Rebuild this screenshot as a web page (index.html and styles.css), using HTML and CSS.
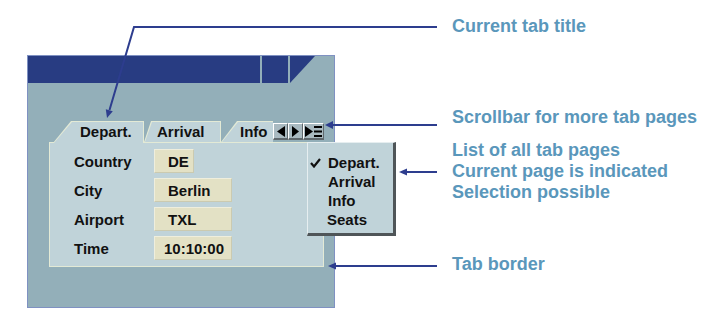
FILE: index.html
```html
<!DOCTYPE html>
<html lang="en">
<head>
    <meta charset="UTF-8">
    <meta name="viewport" content="width=device-width, initial-scale=1.0">
    <title>Tab strip</title>
    <link rel="stylesheet" href="styles.css">
</head>
<body>
    <div class="slide">

        <div class="window">
            <div class="titlebar">
                <div class="bar-main"></div>
                <div class="bar-box"></div>
                <div class="bar-corner"></div>
            </div>

            <div class="tabs">
                <div class="tab tab-active tab-depart"><div class="tab-face">Depart.</div></div>
                <div class="tab tab-arrival"><div class="tab-face">Arrival</div></div>
                <div class="tab tab-info"><div class="tab-face">Info</div></div>
                <div class="scroller">
                    <div class="btn">
                        <svg width="8" height="11" viewBox="0 0 8 11"><polygon points="8,0 8,11 0,5.5" fill="#000"/></svg>
                    </div>
                    <div class="btn">
                        <svg width="7" height="11" viewBox="0 0 7 11"><polygon points="0,0 0,11 7,5.5" fill="#000"/></svg>
                    </div>
                    <div class="btn btn-list">
                        <svg width="17" height="11" viewBox="0 0 17 11">
                            <polygon points="0,0 0,11 8,5.5" fill="#000"/>
                            <rect x="9" y="0" width="8" height="2" fill="#000"/>
                            <rect x="9" y="4.5" width="8" height="2" fill="#000"/>
                            <rect x="9" y="9" width="8" height="2" fill="#000"/>
                        </svg>
                    </div>
                </div>
            </div>

            <div class="panel">
                <div class="form">
                    <div class="label">Country</div>
                    <div class="field field-short">DE</div>
                    <div class="label">City</div>
                    <div class="field">Berlin</div>
                    <div class="label">Airport</div>
                    <div class="field">TXL</div>
                    <div class="label">Time</div>
                    <div class="field field-time">10:10:00</div>
                </div>
            </div>
        </div>

        <!-- tab list dropped from the scroller -->
        <div class="menu">
            <div class="menu-item">
                <svg class="check" width="11" height="10" viewBox="0 0 11 10"><polyline points="1,5 4,8.5 10,1" fill="none" stroke="#111" stroke-width="2.2"/></svg>Depart.
            </div>
            <div class="menu-item">Arrival</div>
            <div class="menu-item">Info</div>
            <div class="menu-item menu-last">Seats</div>
        </div>

        <svg class="callouts" width="706" height="316" viewBox="0 0 706 316">
            <g stroke="#2d3d8e" stroke-width="2" fill="none">
                <polyline points="437,27 134,27 109.5,110"/>
                <line x1="437" y1="125" x2="332" y2="125"/>
                <line x1="437" y1="172" x2="406" y2="172"/>
                <line x1="437" y1="266" x2="335" y2="266"/>
            </g>
            <g fill="#2d3d8e">
                <polygon points="107,118 112.8,111.2 105.8,109.2"/>
                <polygon points="325,125 333,121 333,129"/>
                <polygon points="399,172 407,168.5 407,175.5"/>
                <polygon points="328,266 336,262.5 336,269.5"/>
            </g>
        </svg>

        <div class="note note-title">Current tab title</div>
        <div class="note note-scroll">Scrollbar for more tab pages</div>
        <div class="note note-list">
            List of all tab pages<br>
            Current page is indicated<br>
            Selection possible
        </div>
        <div class="note note-border">Tab border</div>
    </div>
</body>
</html>
```

FILE: styles.css
```css
body {
    margin: 0;
    background: #fff;
    font-family: "Liberation Sans", Arial, sans-serif;
    font-weight: bold;
}

.slide {
    position: relative;
    width: 706px;
    height: 316px;
    overflow: hidden;
}

/* window mockup */
.window {
    position: absolute;
    left: 27px;
    top: 55px;
    width: 308px;
    height: 253px;
    box-sizing: border-box;
    border: 1px solid #7f91c2;
    background-color: #93afb9;
}

.titlebar {
    display: flex;
    gap: 2px;
    height: 27px;
}

.bar-main {
    width: 232px;
    background-color: #283c82;
}

.bar-box {
    width: 26px;
    background-color: #283c82;
}

.bar-corner {
    width: 25px;
    background-color: #283c82;
    clip-path: polygon(0 0, 100% 0, 0 100%);
}

/* tab strip */
.tabs {
    display: flex;
    align-items: flex-start;
    height: 21px;
    margin: 38px 0 0 25px;
}

.tab {
    box-sizing: border-box;
    height: 21px;
    padding: 1px 1px 0 0;
    background-color: #e3ead6;
    font-size: 15px;
    color: #111;
}

.tab-face {
    height: 100%;
    line-height: 20px;
    background-color: #c0d3d9;
}

.tab-active {
    position: relative;
    z-index: 1;
    height: 22px;
}

.tab-depart {
    width: 91px;
    clip-path: polygon(18px 0, 100% 0, 100% 100%, 0 100%);
}

.tab-depart .tab-face {
    padding-left: 27px;
    clip-path: polygon(19px 0, 100% 0, 100% 100%, 1px 100%);
}

.tab-arrival {
    width: 77px;
    clip-path: polygon(7px 0, 100% 0, 100% 100%, 0 100%);
}

.tab-arrival .tab-face {
    padding-left: 13px;
    clip-path: polygon(8px 0, 100% 0, 100% 100%, 1px 100%);
}

.tab-info {
    width: 52px;
    padding-right: 0;
    clip-path: polygon(16px 0, 100% 0, 100% 100%, 0 100%);
}

.tab-info .tab-face {
    padding-left: 19px;
    clip-path: polygon(17px 0, 100% 0, 100% 100%, 1px 100%);
}

.scroller {
    display: flex;
    margin-top: 2px;
}

.btn {
    display: flex;
    align-items: center;
    justify-content: center;
    box-sizing: border-box;
    width: 15px;
    height: 17px;
    background-color: #a9bac1;
    border-top: 1px solid #fff;
    border-left: 1px solid #fff;
    border-right: 1px solid #5f686d;
    border-bottom: 2px solid #5f686d;
}

.btn-list {
    width: 21px;
}

/* content panel */
.panel {
    box-sizing: border-box;
    width: 275px;
    height: 125px;
    margin-left: 21px;
    padding: 6px 0 0 24px;
    border: 1px solid #e3ead6;
    background-color: #c0d3d9;
}

.form {
    display: grid;
    grid-template-columns: 80px auto;
    grid-auto-rows: 24px;
    row-gap: 5px;
    align-items: center;
    justify-items: start;
}

.label {
    font-size: 15px;
    color: #111;
}

.field {
    box-sizing: border-box;
    width: 78px;
    height: 24px;
    padding: 1px 0 0 13px;
    line-height: 22px;
    font-size: 15px;
    color: #111;
    background-color: #e3e1c5;
    border-top: 1px solid #efeedd;
    border-left: 1px solid #efeedd;
    border-right: 1px solid #cbcab0;
    border-bottom: 1px solid #cbcab0;
}

.field-short {
    width: 40px;
}

.field-time {
    padding-left: 9px;
}

/* dropdown list */
.menu {
    position: absolute;
    left: 307px;
    top: 142px;
    width: 89px;
    height: 94px;
    box-sizing: border-box;
    padding: 10px 0 0 20px;
    background-color: #c0d3d9;
    border-top: 1px solid #e6eef0;
    border-left: 1px solid #e6eef0;
    border-right: 3px solid #4f5558;
    border-bottom: 3px solid #4f5558;
}

.menu-item {
    position: relative;
    height: 19px;
    line-height: 19px;
    font-size: 15px;
    color: #111;
}

.menu-last {
    margin-left: -1px;
}

.check {
    position: absolute;
    left: -18px;
    top: 5px;
}

/* callouts */
.callouts {
    position: absolute;
    left: 0;
    top: 0;
}

.note {
    position: absolute;
    left: 452px;
    font-size: 18px;
    line-height: 21px;
    color: #5a97bb;
    white-space: nowrap;
}

.note-title {
    top: 16px;
}

.note-scroll {
    top: 107px;
}

.note-list {
    top: 140px;
}

.note-border {
    top: 254px;
}
```
